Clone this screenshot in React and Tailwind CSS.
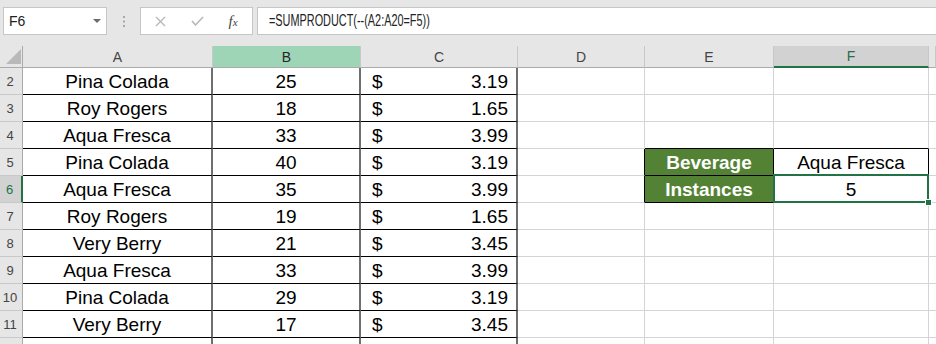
import React from "react";

const rows = [
  [2, "Pina Colada", 25, "3.19"],
  [3, "Roy Rogers", 18, "1.65"],
  [4, "Aqua Fresca", 33, "3.99"],
  [5, "Pina Colada", 40, "3.19"],
  [6, "Aqua Fresca", 35, "3.99"],
  [7, "Roy Rogers", 19, "1.65"],
  [8, "Very Berry", 21, "3.45"],
  [9, "Aqua Fresca", 33, "3.99"],
  [10, "Pina Colada", 29, "3.19"],
  [11, "Very Berry", 17, "3.45"],
];

const cols = "grid grid-cols-[23px_190px_148px_157px_127px_129px_155px_1fr]";

function FormulaBar() {
  return (
    <div className="h-[46px] flex items-start pt-[7px]">
      <div className="ml-[3px] w-[104px] h-[28px] bg-white border border-[#c6c6c6] flex items-center justify-between pl-[5px] pr-[5px]">
        <span className="text-[14px] text-[#222]">F6</span>
        <svg width="8" height="4" viewBox="0 0 8 4">
          <polygon points="0,0 8,0 4,4" fill="#6b6b6b" />
        </svg>
      </div>
      <svg className="ml-[14px] mt-[9px]" width="6" height="11" viewBox="0 0 6 11">
        <rect x="2" y="0" width="2" height="2" fill="#a8a8a8" />
        <rect x="2" y="4.5" width="2" height="2" fill="#a8a8a8" />
        <rect x="2" y="9" width="2" height="2" fill="#a8a8a8" />
      </svg>
      <div className="ml-[13px] w-[113px] h-[28px] bg-white border border-[#c6c6c6] flex items-center">
        <div className="w-[39px] flex justify-center">
          <svg width="11" height="11" viewBox="0 0 11 11">
            <path d="M1 1 L10 10 M10 1 L1 10" stroke="#b8b8b8" strokeWidth="1.4" fill="none" />
          </svg>
        </div>
        <div className="w-[34px] flex justify-center">
          <svg width="13" height="10" viewBox="0 0 13 10">
            <path d="M1 5 L4.5 9 L12 1" stroke="#b8b8b8" strokeWidth="1.6" fill="none" />
          </svg>
        </div>
        <div className="w-[38px] flex justify-center">
          <span className="font-['Liberation_Serif',serif] italic text-[15px] text-[#444] leading-none">
            f<span className="text-[11px]">x</span>
          </span>
        </div>
      </div>
      <div className="ml-[4px] flex-1 -mr-[2px] h-[28px] bg-white border border-[#c6c6c6] flex items-center pl-[11px] overflow-hidden">
        <span className="text-[16px] text-[#222] whitespace-nowrap origin-left scale-x-[0.68] inline-block">
          =SUMPRODUCT(--(A2:A20=F5))
        </span>
      </div>
    </div>
  );
}

function HeaderRow() {
  const base = "h-[22px] flex items-center justify-center text-[14px] border-r border-b";
  return (
    <div className={cols}>
      <div className="h-[22px] flex items-end justify-end pr-[1px] pb-[3px] border-r border-b border-r-[#ababab] border-b-[#ababab]">
        <svg width="15" height="15" viewBox="0 0 15 15">
          <polygon points="15,0 15,15 0,15" fill="#b9b9b9" />
        </svg>
      </div>
      <div className={`${base} text-[#444] border-r-[#c8c8c8] border-b-[#ababab]`}>A</div>
      <div className={`${base} bg-[#9fd5b7] text-[#262626] border-r-[#c8c8c8] border-b-[#ababab]`}>B</div>
      <div className={`${base} text-[#444] border-r-[#c8c8c8] border-b-[#ababab]`}>C</div>
      <div className={`${base} text-[#444] border-r-[#c8c8c8] border-b-[#ababab]`}>D</div>
      <div className={`${base} text-[#444] border-r-[#c8c8c8] border-b-[#ababab]`}>E</div>
      <div className="h-[22px] flex items-center justify-center text-[14px] bg-[#d2d2d2] text-[#2e6b4a] border-r border-r-[#c8c8c8] border-b-2 border-b-[#217346]">
        F
      </div>
      <div className={`${base} border-r-[#c8c8c8] border-b-[#ababab]`}></div>
    </div>
  );
}

function DataRow({ r, name, qty, price }) {
  const sel = r === 6;
  const block = "flex items-center border-b border-b-black border-r-2 border-r-[#6f6f6f]";
  return (
    <div className={`${cols} h-[27px]`}>
      <div
        className={
          sel
            ? "flex items-center justify-center pr-[2px] text-[13px] bg-[#d2d2d2] text-[#217346] border-b border-b-[#c8c8c8] border-r-2 border-r-[#217346]"
            : "flex items-center justify-center pr-[2px] text-[13px] text-[#444] border-b border-b-[#c8c8c8] border-r border-r-[#ababab]"
        }
      >
        {r}
      </div>
      <div className={`${block} justify-center bg-white`}>{name}</div>
      <div className={`${block} justify-center bg-white`}>{qty}</div>
      <div className={`${block} justify-between bg-white pl-[11px] pr-[8px]`}>
        <span>$</span>
        <span>{price}</span>
      </div>
      <div
        className={
          r === 5 || r === 6
            ? "bg-white border-b border-b-[#d4d4d4] border-r border-r-black"
            : "bg-white border-b border-b-[#d4d4d4] border-r border-r-[#d4d4d4]"
        }
      ></div>
      {r === 5 || r === 6 ? (
        <div className="flex items-center justify-center bg-[#548235] text-white font-bold border-b border-b-black border-r border-r-black">
          {r === 5 ? "Beverage" : "Instances"}
        </div>
      ) : (
        <div
          className={
            r === 4
              ? "bg-white border-b border-b-black border-r border-r-[#d4d4d4]"
              : "bg-white border-b border-b-[#d4d4d4] border-r border-r-[#d4d4d4]"
          }
        ></div>
      )}
      {r === 5 || r === 6 ? (
        <div className="relative flex items-center justify-center bg-white border-b border-b-black border-r border-r-black">
          {r === 5 ? "Aqua Fresca" : "5"}
          {sel && (
            <>
              <div className="absolute -top-[2px] -left-[1px] -right-[1px] -bottom-[1px] border-2 border-[#217346]"></div>
              <div className="absolute -right-[4px] -bottom-[4px] w-[7px] h-[7px] bg-[#217346] border border-white"></div>
            </>
          )}
        </div>
      ) : (
        <div
          className={
            r === 4
              ? "bg-white border-b border-b-black border-r border-r-[#d4d4d4]"
              : "bg-white border-b border-b-[#d4d4d4] border-r border-r-[#d4d4d4]"
          }
        ></div>
      )}
      <div className="bg-white border-b border-b-[#d4d4d4]"></div>
    </div>
  );
}

export default function App() {
  return (
    <div className="w-[936px] h-[344px] overflow-hidden bg-[#e6e6e6] font-['Liberation_Sans',Arial,sans-serif] text-[19px] text-black leading-none">
      <FormulaBar />
      <HeaderRow />
      {rows.map(([r, name, qty, price]) => (
        <DataRow key={r} r={r} name={name} qty={qty} price={price} />
      ))}
      <div className={`${cols} h-[27px]`}>
        <div className="border-r border-r-[#ababab]"></div>
        <div className="bg-white border-r-2 border-r-[#6f6f6f]"></div>
        <div className="bg-white border-r-2 border-r-[#6f6f6f]"></div>
        <div className="bg-white border-r-2 border-r-[#6f6f6f]"></div>
        <div className="bg-white border-r border-r-[#d4d4d4]"></div>
        <div className="bg-white border-r border-r-[#d4d4d4]"></div>
        <div className="bg-white border-r border-r-[#d4d4d4]"></div>
        <div className="bg-white"></div>
      </div>
    </div>
  );
}
